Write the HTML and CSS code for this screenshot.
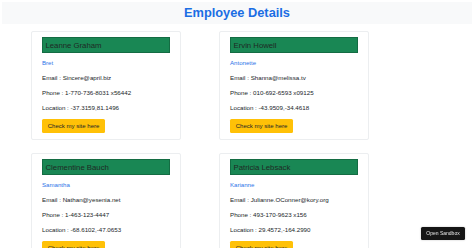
FILE: index.html
```html
<!DOCTYPE html>
<html lang="en">
<head>
<meta charset="utf-8">
<title>Employee Details</title>
<link rel="stylesheet" href="styles.css">
</head>
<body>
<header class="header">
  <h1 class="title">Employee Details</h1>
</header>
<main class="grid">
  <section class="card">
    <h2 class="name">Leanne Graham</h2>
    <a class="user" href="#">Bret</a>
    <p class="line">Email : Sincere@april.biz</p>
    <p class="line">Phone : 1-770-736-8031 x56442</p>
    <p class="line">Location : -37.3159,81.1496</p>
    <button class="site">Check my site here</button>
  </section>
  <section class="card">
    <h2 class="name">Ervin Howell</h2>
    <a class="user" href="#">Antonette</a>
    <p class="line">Email : Shanna@melissa.tv</p>
    <p class="line">Phone : 010-692-6593 x09125</p>
    <p class="line">Location : -43.9509,-34.4618</p>
    <button class="site">Check my site here</button>
  </section>
  <section class="card">
    <h2 class="name">Clementine Bauch</h2>
    <a class="user" href="#">Samantha</a>
    <p class="line">Email : Nathan@yesenia.net</p>
    <p class="line">Phone : 1-463-123-4447</p>
    <p class="line">Location : -68.6102,-47.0653</p>
    <button class="site">Check my site here</button>
  </section>
  <section class="card">
    <h2 class="name">Patricia Lebsack</h2>
    <a class="user" href="#">Karianne</a>
    <p class="line">Email : Julianne.OConner@kory.org</p>
    <p class="line">Phone : 493-170-9623 x156</p>
    <p class="line">Location : 29.4572,-164.2990</p>
    <button class="site">Check my site here</button>
  </section>
</main>
<a class="sandbox" href="#">Open Sandbox</a>
</body>
</html>
```
FILE: styles.css
```css
html, body {
  margin: 0;
  padding: 0;
  background: #ffffff;
  font-family: "Liberation Sans", Arial, sans-serif;
  color: #212529;
  overflow: hidden;
}

.header {
  margin: 2px 2px 0 2px;
  height: 22px;
  background: #f8f9fa;
  display: flex;
  align-items: center;
  justify-content: center;
}

.title {
  margin: 0;
  font-size: 12.8px;
  font-weight: 700;
  color: #1b6ee4;
  line-height: 14px;
}

.grid {
  display: grid;
  grid-template-columns: 150px 150px;
  column-gap: 38px;
  row-gap: 13px;
  padding: 7px 0 0 31px;
}

.card {
  border: 1px solid #eceef0;
  border-radius: 2px;
  padding: 5px 10px 6px 10px;
  display: flex;
  flex-direction: column;
  align-items: flex-start;
  box-shadow: 0 0 1px rgba(0,0,0,0.03);
}

.name {
  align-self: stretch;
  margin: 0 0 6px 0;
  height: 16px;
  background: #198754;
  border: 0.5px solid #146c43;
  box-sizing: border-box;
  color: #1f2a25;
  font-size: 7.75px;
  font-weight: 400;
  line-height: 15px;
  padding-left: 2.5px;
}

.user {
  font-size: 6.1px;
  line-height: 8px;
  color: #2d74e8;
  text-decoration: none;
  margin-bottom: 7px;
}

.line {
  margin: 0 0 7px 0;
  font-size: 6.2px;
  line-height: 8px;
}

.site {
  margin: 0;
  font-family: "Liberation Sans", Arial, sans-serif;
  font-size: 6.05px;
  line-height: 14px;
  height: 14px;
  padding: 0 5.7px;
  border: none;
  border-radius: 1.5px;
  background: #ffc107;
  color: #212529;
}

.sandbox {
  position: fixed;
  right: 9px;
  bottom: 8px;
  width: 44px;
  height: 13px;
  box-sizing: border-box;
  background: #151515;
  color: #e6e6e6;
  font-size: 5px;
  line-height: 13px;
  text-align: center;
  text-decoration: none;
  border-radius: 1.5px;
  box-shadow: 0 0 2px rgba(0,0,0,0.25);
}
```
